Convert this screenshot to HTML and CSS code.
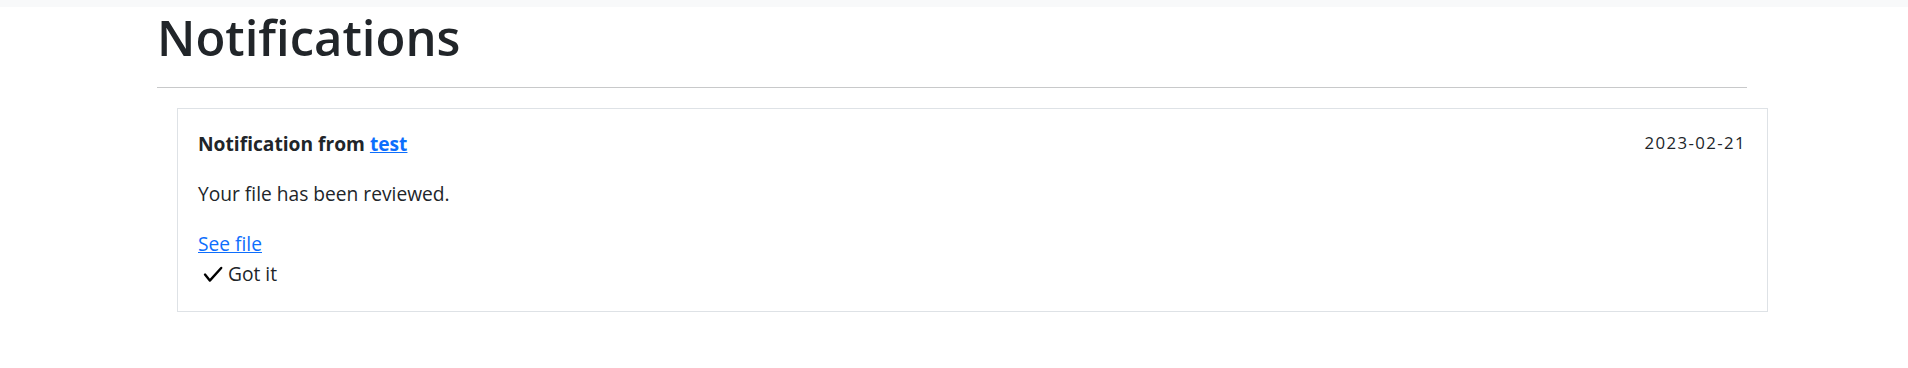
FILE: index.html
```html
<!DOCTYPE html>
<html lang="en">
<head>
<meta charset="utf-8">
<title>Notifications</title>
<link rel="stylesheet" href="styles.css">
</head>
<body>
<div class="topbar"></div>
<main class="container">
  <h1 class="page-title">Notifications</h1>
  <hr class="divider">
  <div class="card">
    <div class="card-body">
      <div class="card-head">
        <strong class="card-title">Notification from <a href="#" class="link">test</a></strong>
        <small class="card-date">2023-02-21</small>
      </div>
      <p class="card-text">Your file has been reviewed.</p>
      <a href="#" class="link see-file">See file</a>
      <button type="button" class="got-it">
        <svg class="check" width="20" height="17" viewBox="0 0 20 17" aria-hidden="true"><polyline points="2,8.6 6.8,14.6 18.2,2" fill="none" stroke="#000" stroke-width="2.4" stroke-linecap="round" stroke-linejoin="round"/></svg>
        <span>Got it</span>
      </button>
    </div>
  </div>
</main>
</body>
</html>
```
FILE: styles.css
```css
* { box-sizing: border-box; }
html, body { margin: 0; padding: 0; background: #fff; }
body {
  font-family: "Open Sans", "Noto Sans", sans-serif;
  color: #212529;
  font-size: 19.2px;
  line-height: 29px;
}
.topbar { height: 7px; background: #f8f9fa; }
.container { margin-left: 157px; width: 1590px; }
.page-title {
  margin: 0;
  font-size: 49px;
  font-weight: 600;
  line-height: 60px;
  color: #212529;
}
.divider {
  margin: 20px 0 0;
  border: 0;
  border-top: 1px solid #c8c9ca;
  height: 0;
}
.card {
  margin: 20px 0 0 20px;
  width: 1591px;
  border: 1px solid #dee2e6;
  background: #fff;
}
.card-body { padding: 20px 21px 23px 20px; }
.card-head {
  display: flex;
  justify-content: space-between;
  align-items: flex-start;
  height: 29px;
}
.card-title { font-weight: 700; line-height: 29px; }
.card-date { font-size: 16.8px; letter-spacing: 1.4px; line-height: 27px; }
.link { color: #0d6efd; text-decoration: underline; }
.card-text { margin: 21px 0 21px; }
.see-file { display: block; width: max-content; line-height: 29px; }
.got-it {
  display: flex;
  align-items: center;
  gap: 5px;
  height: 29px;
  margin-top: 1px;
  padding: 0 0 0 5px;
  border: 0;
  background: none;
  font: inherit;
  color: #212529;
  line-height: 29px;
  cursor: pointer;
}
.check { display: block; margin-top: 2px; }
```
